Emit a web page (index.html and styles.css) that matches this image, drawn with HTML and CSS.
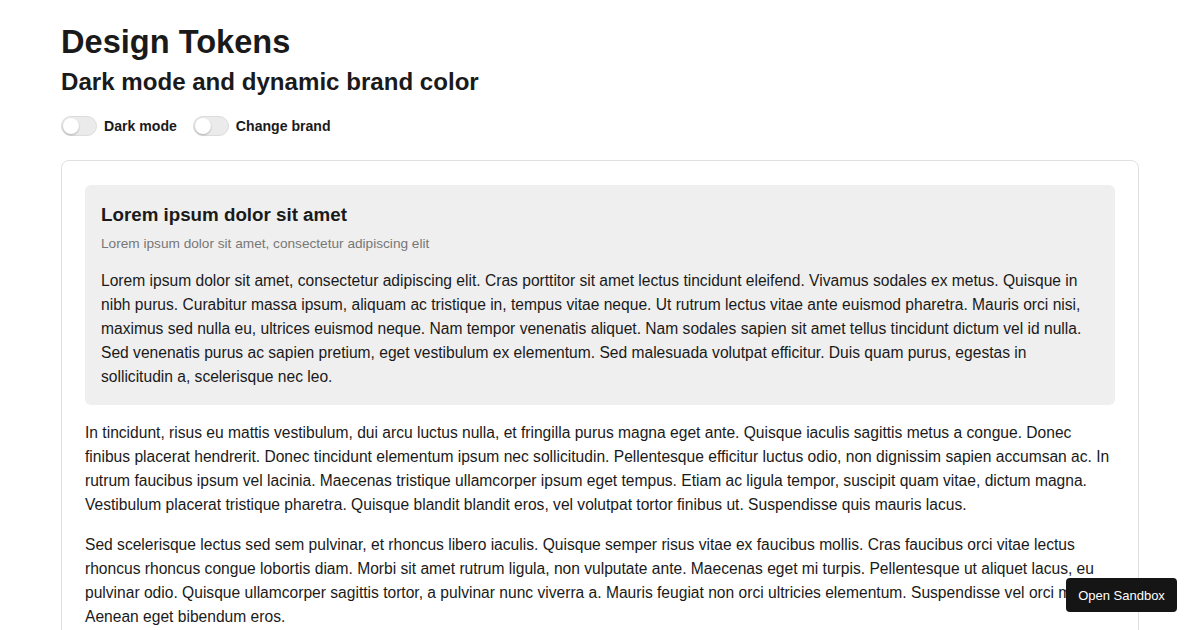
FILE: index.html
```html
<!DOCTYPE html>
<html lang="en">
<head>
<meta charset="utf-8">
<title>Design Tokens</title>
<link rel="stylesheet" href="styles.css">
</head>
<body>
<main class="page">
  <h1 class="title">Design Tokens</h1>
  <h2 class="subtitle">Dark mode and dynamic brand color</h2>
  <div class="toggles">
    <label class="toggle"><span class="switch"><span class="knob"></span></span><span class="toggle-label">Dark mode</span></label>
    <label class="toggle"><span class="switch"><span class="knob"></span></span><span class="toggle-label">Change brand</span></label>
  </div>
  <section class="card">
    <div class="panel">
      <h3 class="panel-title">Lorem ipsum dolor sit amet</h3>
      <p class="panel-sub">Lorem ipsum dolor sit amet, consectetur adipiscing elit</p>
      <p class="text">Lorem ipsum dolor sit amet, consectetur adipiscing elit. Cras porttitor sit amet lectus tincidunt eleifend. Vivamus sodales ex metus. Quisque in nibh purus. Curabitur massa ipsum, aliquam ac tristique in, tempus vitae neque. Ut rutrum lectus vitae ante euismod pharetra. Mauris orci nisi, maximus sed nulla eu, ultrices euismod neque. Nam tempor venenatis aliquet. Nam sodales sapien sit amet tellus tincidunt dictum vel id nulla. Sed venenatis purus ac sapien pretium, eget vestibulum ex elementum. Sed malesuada volutpat efficitur. Duis quam purus, egestas in sollicitudin a, scelerisque nec leo.</p>
    </div>
    <p class="text">In tincidunt, risus eu mattis vestibulum, dui arcu luctus nulla, et fringilla purus magna eget ante. Quisque iaculis sagittis metus a congue. Donec finibus placerat hendrerit. Donec tincidunt elementum ipsum nec sollicitudin. Pellentesque efficitur luctus odio, non dignissim sapien accumsan ac. In rutrum faucibus ipsum vel lacinia. Maecenas tristique ullamcorper ipsum eget tempus. Etiam ac ligula tempor, suscipit quam vitae, dictum magna. Vestibulum placerat tristique pharetra. Quisque blandit blandit eros, vel volutpat tortor finibus ut. Suspendisse quis mauris lacus.</p>
    <p class="text">Sed scelerisque lectus sed sem pulvinar, et rhoncus libero iaculis. Quisque semper risus vitae ex faucibus mollis. Cras faucibus orci vitae lectus rhoncus rhoncus congue lobortis diam. Morbi sit amet rutrum ligula, non vulputate ante. Maecenas eget mi turpis. Pellentesque ut aliquet lacus, eu pulvinar odio. Quisque ullamcorper sagittis tortor, a pulvinar nunc viverra a. Mauris feugiat non orci ultricies elementum. Suspendisse vel orci mi. Aenean eget bibendum eros.</p>
  </section>
</main>
<button class="sandbox">Open Sandbox</button>
</body>
</html>
```

FILE: styles.css
```css
* { box-sizing: border-box; }
html, body { margin: 0; padding: 0; background: #fff; }
body {
  font-family: "Liberation Sans", Arial, sans-serif;
  color: #1a1a1a;
  overflow: hidden;
}
.page {
  padding: 23px 61px 0 61px;
}
.title {
  margin: 0;
  font-size: 32.6px;
  line-height: 37px;
  font-weight: 700;
  color: #1a1a1a;
}
.subtitle {
  margin: 8px 0 0 0;
  font-size: 24.1px;
  line-height: 28px;
  font-weight: 700;
  color: #1a1a1a;
}
.toggles {
  display: flex;
  align-items: center;
  gap: 16px;
  margin-top: 20px;
  height: 20px;
}
.toggle {
  display: flex;
  align-items: center;
  gap: 7px;
}
.switch {
  position: relative;
  display: block;
  width: 36px;
  height: 20px;
  border-radius: 10px;
  background: #ebebeb;
  border: 1px solid #dcdcdc;
}
.knob {
  position: absolute;
  left: 1px;
  top: 1px;
  width: 16px;
  height: 16px;
  border-radius: 50%;
  background: #fff;
  box-shadow: 0 1px 2px rgba(0,0,0,0.25);
}
.toggle-label {
  font-size: 14.1px;
  font-weight: 700;
  color: #1a1a1a;
}
.card {
  margin-top: 24px;
  border: 1px solid #e0e0e0;
  border-radius: 8px;
  padding: 24px 23px 24px 23px;
  height: 600px;
}
.panel {
  background: #efefef;
  border-radius: 6px;
  padding: 17px 16px 16px 16px;
  margin-bottom: 16px;
}
.panel-title {
  margin: 0;
  font-size: 18.75px;
  line-height: 26px;
  font-weight: 700;
  color: #1a1a1a;
}
.panel-sub {
  margin: 6px 0 15px 0;
  font-size: 13.65px;
  line-height: 20px;
  color: #777;
}
.text {
  margin: 0 0 16px 0;
  font-size: 15.6px;
  line-height: 24px;
  color: #1a1a1a;
}
.panel .text { margin: 0; }
.sandbox {
  position: fixed;
  right: 23px;
  bottom: 18px;
  width: 111px;
  height: 34px;
  background: #151515;
  color: #fff;
  border: none;
  border-radius: 4px;
  font-family: "Liberation Sans", Arial, sans-serif;
  font-size: 13px;
  padding: 0;
}
```
